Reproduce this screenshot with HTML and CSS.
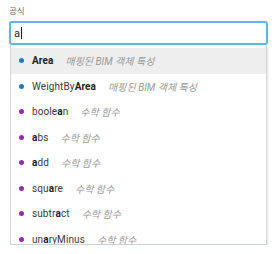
FILE: index.html
```html
<!DOCTYPE html>
<html lang="ko">
<head>
    <meta charset="UTF-8">
    <meta name="viewport" content="width=device-width, initial-scale=1.0">
    <title>공식</title>
    <link rel="stylesheet" href="styles.css">
</head>
<body>
    <div class="field">
        <div class="label">공식</div>
        <div class="input"><span class="value">a</span><span class="caret"></span></div>

        <div class="dropdown">
            <div class="group"></div>
            <div class="item active"><span class="dot bim"></span><span class="name"><b>Area</b></span><span class="desc">매핑된 BIM 객체 특성</span></div>
            <div class="item"><span class="dot bim"></span><span class="name">WeightBy<b>Area</b></span><span class="desc">매핑된 BIM 객체 특성</span></div>
            <div class="item"><span class="dot fn"></span><span class="name">boole<b>a</b>n</span><span class="desc">수학 함수</span></div>
            <div class="item"><span class="dot fn"></span><span class="name"><b>a</b>bs</span><span class="desc">수학 함수</span></div>
            <div class="item"><span class="dot fn"></span><span class="name"><b>a</b>dd</span><span class="desc">수학 함수</span></div>
            <div class="item"><span class="dot fn"></span><span class="name">squ<b>a</b>re</span><span class="desc">수학 함수</span></div>
            <div class="item"><span class="dot fn"></span><span class="name">subtr<b>a</b>ct</span><span class="desc">수학 함수</span></div>
            <div class="item"><span class="dot fn"></span><span class="name">un<b>a</b>ryMinus</span><span class="desc">수학 함수</span></div>
        </div>
    </div>
</body>
</html>
```

FILE: styles.css
```css
body {
    margin: 0;
    padding: 0;
    background-color: #ffffff;
    font-family: Roboto, "Noto Sans CJK KR", sans-serif;
    color: #333333;
}
.field {
    padding: 5px 7px 0 9px;
}
.label {
    font-size: 8.5px;
    line-height: 12px;
    color: #666666;
    margin-bottom: 4px;
}
.input {
    box-sizing: border-box;
    width: 259px;
    height: 24px;
    border: 2px solid #5cb8ec;
    border-radius: 3px;
    padding-left: 3px;
    display: flex;
    align-items: center;
    font-size: 11px;
    color: #222222;
}
.caret {
    width: 1px;
    height: 12px;
    background-color: #222222;
    margin-left: 1px;
}
.dropdown {
    box-sizing: border-box;
    width: 257px;
    height: 200px;
    margin-left: 1px;
    overflow: hidden;
    border: 1px solid #d6d6d6;
    border-top: none;
    border-bottom-color: #c9d3dc;
    box-shadow: 1px 1px 2px rgba(0, 0, 0, 0.12);
}
.group {
    height: 3px;
    border-top: 1px solid #f0f0f0;
    box-sizing: border-box;
}
.item {
    height: 25.5px;
    display: flex;
    align-items: center;
    padding-left: 8px;
    font-size: 10px;
    white-space: nowrap;
}
.item.active {
    background-color: #eeeeee;
}
.dot {
    width: 5px;
    height: 5px;
    border-radius: 50%;
    margin-right: 8px;
    flex: none;
}
.dot.bim {
    background-color: #1a7dc9;
}
.dot.fn {
    background-color: #9a27b0;
}
.name {
    color: #3a3a3a;
    letter-spacing: 0.1px;
}
.name b {
    font-weight: 700;
    color: #222222;
}
.desc {
    margin-left: 12px;
    font-size: 10px;
    font-style: italic;
    color: #999999;
}
```
